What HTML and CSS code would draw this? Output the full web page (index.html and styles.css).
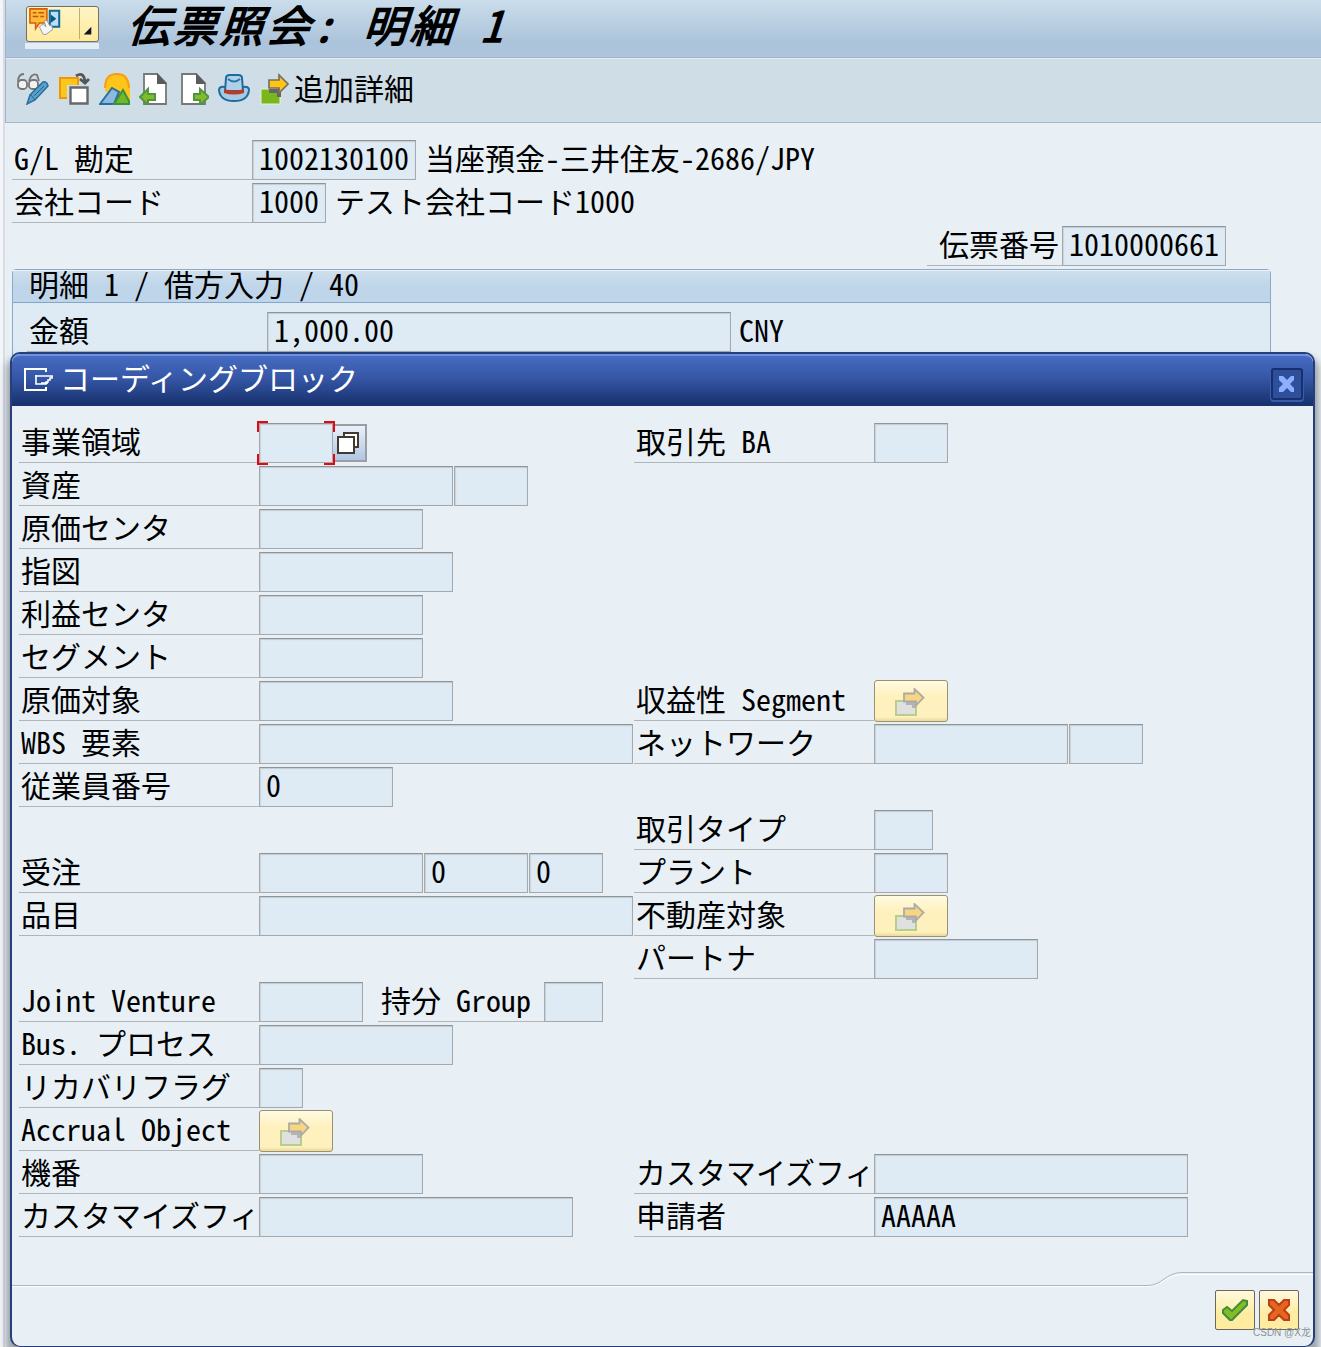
FILE: index.html
```
<!DOCTYPE html>
<html lang="ja">
<head>
  <meta charset="UTF-8">
  <title>伝票照会: 明細 1</title>
  <link rel="stylesheet" href="styles.css">
</head>
<body>

<!-- icon shared by the three detail buttons -->
<svg class="defs" width="0" height="0">
  <symbol id="detail" viewBox="0 0 30 28">
    <rect x="1" y="13" width="20" height="14" fill="#e0e0e0" stroke="#b4d08c" stroke-width="2"/>
    <path d="M11 12h10v8h-4v-3h-6z" fill="#b4b4b4"/>
    <path d="M9 5.500h10.500v-4.500l9 8.500-7.500 8v-4h-12z" fill="#f8d680" stroke="#aaa" stroke-width="1.800"/>
  </symbol>
</svg>

<div class="window">
  <header class="titlebar">
    <button class="menu-btn">
      <svg width="73" height="36" viewBox="0 0 73 36">
        <path d="M2 2h18v15h-8l-4 6v-6H2z" fill="#fdbc33" stroke="#d85b17" stroke-width="1.700"/>
        <path d="M5 6h4m2 0h6M5 10h6m2 0h4" stroke="#c65316" stroke-width="1.600"/>
        <path d="M23 4h10v17H23z" fill="#b9e0f6" stroke="#166896" stroke-width="2.200"/>
        <path d="M24 8l6 4.500-6 4.500z" fill="#075986"/>
        <path d="M12 21l4-3 3 3-2-6 3-1 3 6 2-1 1 5-7 5h-3z" fill="#f5f5f5" stroke="#9a9a9a"/>
        <path d="M54.500 1v33" stroke="#b8aa70"/>
        <path d="M67 21v8h-8z" fill="#111827"/>
      </svg>
    </button>
    <h1>伝票照会: 明細 1</h1>
  </header>

  <nav class="toolbar">
    <svg width="32" height="32" viewBox="0 0 32 32">
      <path d="M1 9c0-5 2-8 6-8M12 8c1-4 4-8 8-6l2 6" fill="none" stroke="#777" stroke-width="1.800"/>
      <rect x="1" y="7" width="9" height="9" rx="3.500" fill="#f2f2f2" stroke="#777" stroke-width="1.800"/>
      <rect x="12" y="7" width="9" height="9" rx="3.500" fill="#f2f2f2" stroke="#777" stroke-width="1.800"/>
      <path d="M10 31l3-9 13-13q4-1 5 4l-13 14z" fill="#5c9fca" stroke="#28709e" stroke-width="1.500"/>
      <path d="M14 22l4 5M17 23l10-10" stroke="#216491" fill="none"/>
    </svg>
    <svg width="32" height="32" viewBox="0 0 32 32">
      <path d="M2 5h18v20H2z" fill="#ffc61a" stroke="#ef960b" stroke-width="2"/>
      <path d="M9 12h21v20H9z" fill="#cfdde7"/>
      <path d="M12.500 14.500h17v16h-17z" fill="#fff" stroke="#686868" stroke-width="2.400"/>
      <path d="M18 3q8-5 9 6M22 6l5 4 4-4" fill="none" stroke="#555" stroke-width="2.800"/>
    </svg>
    <svg width="31" height="32" viewBox="0 0 31 32">
      <path d="M6 18V9q3-9 13-9t12 12v19z" fill="#ffc51b"/>
      <path d="M6 15Q6 1 18 1q11 0 12 14" fill="none" stroke="#f99c1b" stroke-width="2"/>
      <path d="M1 31l12-16 7 4-5 12z" fill="#8db9df" stroke="#24719e" stroke-width="2"/>
      <path d="M15 31l9-14 6 11v3z" fill="#75b52a" stroke="#389341" stroke-width="2"/>
    </svg>
    <svg width="32" height="32" viewBox="0 0 32 32">
      <path d="M5 1h13l9 9v21H5z" fill="#fff" stroke="#777" stroke-width="1.800"/>
      <path d="M18 0l10 11H18z" fill="#5b5b5b"/>
      <path d="M1 24l8-8v5h7v6H9v5z" fill="#83bb29" stroke="#4e963f" stroke-width="2"/>
    </svg>
    <svg width="29" height="32" viewBox="0 0 29 32">
      <path d="M2 1h14l9 9v21H2z" fill="#fff" stroke="#777" stroke-width="1.800"/>
      <path d="M16 0l10 11H16z" fill="#5b5b5b"/>
      <path d="M29 24l-9-8v5h-6v6h6v5z" fill="#83bb29" stroke="#4e963f" stroke-width="2"/>
    </svg>
    <svg width="33" height="32" viewBox="0 0 33 32">
      <path d="M7 14q-6-1-6 3 1 11 15 11t15-11q0-4-6-3z" fill="#a6cae5" stroke="#1c6b9c" stroke-width="2"/>
      <path d="M7 18L8 5q0-3 4-3h8q4 0 4 3l1 13z" fill="#b0d0e9" stroke="#1c6b9c" stroke-width="2"/>
      <path d="M10 6q6 5 12 0" fill="none" stroke="#2878a8" stroke-width="2"/>
      <path d="M6 16q10 3 20 0v4q-10 3-20 0z" fill="#b93b26"/>
    </svg>
    <button class="text-btn">
      <svg width="30" height="32" viewBox="0 0 30 32">
        <path d="M1 16h19v15H1z" fill="#79b71b" stroke="#e9eed6"/>
        <path d="M9 16h12v8h-4v-4H9z" fill="#666"/>
        <path d="M9 7h10V2l9 9-9 9v-5H9z" fill="#ffc414" stroke="#78705e" stroke-width="1.700"/>
      </svg>
      追加詳細
    </button>
  </nav>

  <main class="content">
    <div class="row">
      <label>G/L 勘定</label><span class="field c10">1002130100</span><span class="desc">当座預金-三井住友-2686/JPY</span>
    </div>
    <div class="row">
      <label>会社コード</label><span class="field c4">1000</span><span class="desc">テスト会社コード1000</span>
    </div>
    <div class="row doc-no">
      <label>伝票番号</label><span class="field c10">1010000661</span>
    </div>
    <section class="panel">
      <h2>明細 1 / 借方入力 / 40</h2>
      <div class="row">
        <label>金額</label><span class="field c30">1,000.00</span><span class="desc">CNY</span>
      </div>
    </section>
  </main>
</div>

<div class="dialog">
  <div class="dialog-head">
    <svg width="30" height="24" viewBox="0 0 30 24" fill="none" stroke="#fff" stroke-width="2">
      <path d="M22 4V1H1v21h21v-3"/>
      <path d="M11 8h18M12 7v9h10v-2h2v-2h2v-2h2V8M17 15h7" stroke-width="1.600"/>
    </svg>
    <h2>コーディングブロック</h2>
    <button class="close">
      <svg width="16" height="16" viewBox="0 0 16 16"><path d="M1 0h3l4 4 4-4h3v4l-4 4 4 4v4h-3l-4-4-4 4H0v-4l4-4-4-4V0z" fill="#8cb0ff"/></svg>
    </button>
  </div>

  <div class="form">
    <div class="col">
      <div class="row">
        <label>事業領域</label><span class="field c4 focus"><i class="corners"></i></span><button class="f4">
          <svg width="24" height="24" viewBox="0 0 24 24" fill="#fff" stroke="#403a32" stroke-width="2"><path d="M8 2h14v14H8z"/><path d="M2 6h16v16H2z"/></svg>
        </button>
      </div>
      <div class="row"><label>資産</label><span class="field c12"></span><span class="field c4"></span></div>
      <div class="row"><label>原価センタ</label><span class="field c10"></span></div>
      <div class="row"><label>指図</label><span class="field c12"></span></div>
      <div class="row"><label>利益センタ</label><span class="field c10"></span></div>
      <div class="row"><label>セグメント</label><span class="field c10"></span></div>
      <div class="row"><label>原価対象</label><span class="field c12"></span></div>
      <div class="row"><label>WBS 要素</label><span class="field c24"></span></div>
      <div class="row"><label>従業員番号</label><span class="field c8">0</span></div>
      <div class="row"></div>
      <div class="row"><label>受注</label><span class="field c10"></span><span class="field c6">0</span><span class="field c4">0</span></div>
      <div class="row"><label>品目</label><span class="field c24"></span></div>
      <div class="row"></div>
      <div class="row">
        <label>Joint Venture</label><span class="field c6"></span>
        <label class="group">持分 Group</label><span class="field c3"></span>
      </div>
      <div class="row"><label>Bus. プロセス</label><span class="field c12"></span></div>
      <div class="row"><label>リカバリフラグ</label><span class="field c2"></span></div>
      <div class="row"><label>Accrual Object</label><button class="detail"><svg width="30" height="28"><use href="#detail"/></svg></button></div>
      <div class="row"><label>機番</label><span class="field c10"></span></div>
      <div class="row"><label>カスタマイズフィ</label><span class="field c20"></span></div>
    </div>

    <div class="col">
      <div class="row"><label>取引先 BA</label><span class="field c4"></span></div>
      <div class="row"></div>
      <div class="row"></div>
      <div class="row"></div>
      <div class="row"></div>
      <div class="row"></div>
      <div class="row"><label>収益性 Segment</label><button class="detail"><svg width="30" height="28"><use href="#detail"/></svg></button></div>
      <div class="row"><label>ネットワーク</label><span class="field c12"></span><span class="field c4"></span></div>
      <div class="row"></div>
      <div class="row"><label>取引タイプ</label><span class="field c3"></span></div>
      <div class="row"><label>プラント</label><span class="field c4"></span></div>
      <div class="row"><label>不動産対象</label><button class="detail"><svg width="30" height="28"><use href="#detail"/></svg></button></div>
      <div class="row"><label>パートナ</label><span class="field c10"></span></div>
      <div class="row"></div>
      <div class="row"></div>
      <div class="row"></div>
      <div class="row"></div>
      <div class="row"><label>カスタマイズフィ</label><span class="field c20"></span></div>
      <div class="row"><label>申請者</label><span class="field c20">AAAAA</span></div>
    </div>
  </div>

  <div class="dialog-foot">
    <svg class="divider" width="1301" height="17" viewBox="0 0 1301 17" fill="none">
      <path d="M0 15.500h1136c14 0 18-12 34-12h131" stroke="#fff"/>
      <path d="M0 14.500h1136c14 0 18-13 34-13h131" stroke="#a8b5c4"/>
    </svg>
    <div class="actions">
      <button>
        <svg width="28" height="24" viewBox="0 0 28 24"><path d="M2 12l4-3 5 4L22 2l4 1v4L11 22H9L2 15z" fill="#83bd24" stroke="#3f8b42" stroke-width="2"/></svg>
      </button>
      <button>
        <svg width="24" height="24" viewBox="0 0 24 24"><path d="M2 2h5l5 5 5-5h5v5l-5 5 5 5v5h-5l-5-5-5 5H2v-5l5-5-5-5z" fill="#e5671d" stroke="#bd3c1c" stroke-width="2"/></svg>
      </button>
    </div>
  </div>
</div>

<div class="watermark">CSDN @X龙</div>

</body>
</html>
```

FILE: styles.css
```
* { box-sizing: border-box; }
html, body { height: 100%; }
body {
  margin: 0;
  overflow: hidden;
  position: relative;
  background: #f4f5f8;
  color: #000;
  font: 30px/35px "Noto Sans CJK JP", sans-serif;
  font-feature-settings: "hwid";
}
h1, h2 { margin: 0; font-size: 30px; font-weight: normal; }
button { padding: 0; font: inherit; font-feature-settings: inherit; color: inherit; }
svg { display: block; flex: none; }
.defs { position: absolute; }

.window {
  height: 1347px;
  margin-left: 3px;
  border-left: 2px solid #d7dce5;
  background: #e8f0f6;
}
.titlebar {
  display: flex;
  height: 58px;
  padding-left: 19px;
  border-left: 1px solid #a2b4c7;
  border-bottom: 1px solid #9fb3c8;
  background: linear-gradient(#cbddeb, #abc3db 75%, #adc5dd);
}
.menu-btn {
  width: 74px;
  height: 49px;
  border: 0;
  border-bottom: 6px solid #e4edf5;
  background: none;
  padding-bottom: 1px;
}
.menu-btn svg {
  margin-top: 6px;
  margin-left: 1px;
  border: 1px solid #75705f;
  border-radius: 3px;
  background: linear-gradient(#fff4c5, #ffeb9c);
}
.titlebar h1 {
  margin-left: 32px;
  font-size: 43px;
  line-height: 46px;
  letter-spacing: 3.5px;
  white-space: pre;
  transform: skewX(-18deg);
  -webkit-text-stroke: 1.5px #000;
}
.toolbar {
  display: flex;
  align-items: flex-start;
  gap: 9px;
  height: 65px;
  padding: 14px 0 0 11px;
  border-left: 1px solid #a2b4c7;
  border-top: 1px solid #e5edf3;
  border-bottom: 1px solid #a5b7c8;
  background: #cfdde7;
}
.text-btn { display: flex; gap: 4px; line-height: 29px; border: 0; background: none; }

/* form rows */
.row { display: flex; height: 40px; margin-bottom: 3px; white-space: pre; }
.row label { width: 240px; flex: none; padding-left: 2px; border-bottom: 1px solid #b1b5b7; }
.field {
  position: relative;
  flex: none;
  padding-left: 6px;
  border: 1px solid #a5a9ab;
  border-top-color: #8f9496;
  background: #deebf4;
  box-shadow: inset 0 1px 1px #c1cbd1, inset 1px 0 1px #cbd5db;
  line-height: 33px;
}
.field + .field { margin-left: 1px; }
.desc { padding-left: 9px; }
.c2 { width: 44px; }
.c3 { width: 59px; }
.c4 { width: 74px; }
.c6 { width: 104px; }
.c8 { width: 134px; }
.c10 { width: 164px; }
.c12 { width: 194px; }
.c20 { width: 314px; }
.c24 { width: 374px; }
.c30 { width: 464px; }

.content { padding: 17px 50px 0 7px; }
.doc-no { margin-left: 915px; }
.doc-no label { width: 135px; padding-left: 12px; }
.panel {
  width: 1259px;
  height: 200px;
  border: 1px solid #8caac7;
  border-radius: 4px 4px 0 0;
  background: #deebf4;
}
.panel h2 {
  height: 33px;
  padding-left: 16px;
  line-height: 25px;
  border-top: 1px solid #eaf2f8;
  border-bottom: 1px solid #84a5c6;
  background: linear-gradient(#cfdfed, #bed5ea 50%);
  white-space: pre;
}
.panel .row { margin: 9px 0 0 14px; }
.panel .desc { padding-left: 8px; }

.dialog {
  position: absolute;
  left: 10px;
  top: 352px;
  width: 1305px;
  height: 995px;
  border: 2px solid #263f7c;
  border-bottom-width: 1px;
  border-radius: 10px;
  background: #e8f0f6;
  box-shadow: 0 8px 6px 4px rgba(70, 75, 80, .45);
}
.dialog-head {
  display: flex;
  align-items: center;
  height: 52px;
  padding: 0 10px 0 12px;
  border-top: 2px solid #6d94db;
  border-radius: 8px 8px 0 0;
  background: linear-gradient(#466bc2, #3556a5 45%, #193370 95%);
  color: #fff;
}
.dialog-head > svg { margin-bottom: 2px; }
.dialog-head h2 { margin-left: 6px; padding-bottom: 8px; }
.close {
  display: grid;
  place-items: center;
  width: 32px;
  height: 32px;
  margin: 6px 0 0 auto;
  border: 2px solid #182f6b;
  border-radius: 3px;
  background: #2e4f9c;
  box-shadow: 0 1px 0 1px #3a5cab;
}

.form { display: flex; height: 860px; padding: 17px 0 0 7px; }
.col { width: 615px; }
.row .group { width: 166px; margin-left: 15px; padding-left: 3px; }
.corners {
  position: absolute;
  inset: -3px;
  background:
    linear-gradient(#e30613, #e30613) 0 0 / 11px 2px,
    linear-gradient(#e30613, #e30613) 0 0 / 2px 11px,
    linear-gradient(#e30613, #e30613) 100% 0 / 11px 2px,
    linear-gradient(#e30613, #e30613) 100% 0 / 2px 11px,
    linear-gradient(#e30613, #e30613) 0 100% / 11px 2px,
    linear-gradient(#e30613, #e30613) 0 100% / 2px 11px,
    linear-gradient(#e30613, #e30613) 100% 100% / 11px 2px,
    linear-gradient(#e30613, #e30613) 100% 100% / 2px 11px;
  background-repeat: no-repeat;
}
.focus { z-index: 1; }
.f4 {
  display: flex;
  align-items: center;
  width: 34px;
  height: 38px;
  margin-top: 1px;
  padding-left: 3px;
  border: 2px solid #9a9da1;
  border-left: 0;
  background: linear-gradient(#e9f0fa, #b1c6e2);
}
.detail {
  display: grid;
  place-items: center;
  width: 74px;
  height: 42px;
  margin-top: -1px;
  border: 1px solid #9b9172;
  border-radius: 3px;
  background: linear-gradient(#fffae1, #fff1bd 40%, #fff1bd 90%, #e9d99b);
}
.detail svg { margin: 2px 3px 0 0; }

.divider { margin-top: 5px; }
.actions { display: flex; justify-content: flex-end; gap: 4px; padding: 2px 14px 0 0; }
.actions button {
  display: grid;
  place-items: center;
  width: 40px;
  height: 40px;
  border: 1px solid #6c675a;
  border-radius: 2px;
  background: linear-gradient(#fffadf, #ffeca0 60%);
}

.watermark {
  position: absolute;
  left: 1253px;
  top: 1326px;
  font: 10px/14px "Liberation Sans", "Noto Sans CJK SC", sans-serif;
  color: #8d9194;
}
```
